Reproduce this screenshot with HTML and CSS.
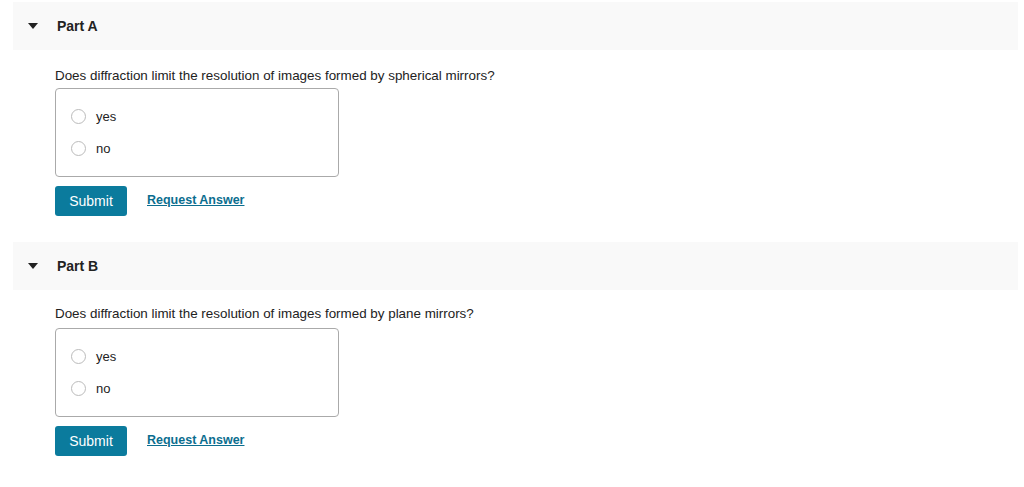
FILE: index.html
```html
<html>
	<head>
		<meta charset="utf-8">
		<title>Parts</title>
		<link rel="stylesheet" href="styles.css">
	</head>
	<body>
		<div class="part">
			<div class="part-header"><span class="arrow"></span><span class="part-title">Part A</span></div>
			<div class="part-body">
				<p class="question">Does diffraction limit the resolution of images formed by spherical mirrors?</p>
				<div class="choices">
					<label class="choice"><input type="radio" name="a"><span>yes</span></label>
					<label class="choice"><input type="radio" name="a"><span>no</span></label>
				</div>
				<div class="actions">
					<button type="button" class="submit">Submit</button>
					<a href="#" class="request">Request Answer</a>
				</div>
			</div>
		</div>
		<div class="part">
			<div class="part-header"><span class="arrow"></span><span class="part-title">Part B</span></div>
			<div class="part-body">
				<p class="question">Does diffraction limit the resolution of images formed by plane mirrors?</p>
				<div class="choices">
					<label class="choice"><input type="radio" name="b"><span>yes</span></label>
					<label class="choice"><input type="radio" name="b"><span>no</span></label>
				</div>
				<div class="actions">
					<button type="button" class="submit">Submit</button>
					<a href="#" class="request">Request Answer</a>
				</div>
			</div>
		</div>
	</body>
</html>
```

FILE: styles.css
```css
body {
	margin: 0;
	padding: 2px 6px 0 13px;
	font-family: "Liberation Sans", Arial, sans-serif;
	color: #222;
	background: #fff;
}
.part {
	height: 240px;
}
.part-header {
	height: 48px;
	background: #f9f9f9;
	display: flex;
	align-items: center;
}
.arrow {
	width: 0;
	height: 0;
	margin-left: 15px;
	border-left: 5px solid transparent;
	border-right: 5px solid transparent;
	border-top: 6px solid #222;
}
.part-title {
	margin-left: 19px;
	font-size: 14px;
	font-weight: bold;
	color: #222;
}
.part-body {
	padding-left: 42px;
}
.question {
	margin: 18px 0 0 0;
	font-size: 13.4px;
	line-height: 15px;
	color: #222;
}
.part + .part .question {
	margin-top: 16px;
}
.choices {
	margin-top: 5px;
	width: 284px;
	height: 89px;
	border: 1px solid #aaa;
	border-radius: 4px;
	padding: 20px 0 0 15px;
	box-sizing: border-box;
}
.part + .part .choices {
	margin-top: 7px;
}
.choice {
	display: flex;
	align-items: center;
	height: 15px;
	margin-bottom: 17px;
	font-size: 13px;
	color: #222;
}
.choice input {
	-webkit-appearance: none;
	appearance: none;
	width: 15px;
	height: 15px;
	margin: 0 10px 0 0;
	border: 1px solid #bbb;
	border-radius: 50%;
	background: #fff;
}
.actions {
	margin-top: 9px;
	display: flex;
	align-items: center;
}
.submit {
	width: 72px;
	height: 30px;
	background: #0b7b9d;
	color: #fff;
	border: none;
	border-radius: 3px;
	font-family: "Liberation Sans", Arial, sans-serif;
	font-size: 14px;
	padding: 0;
}
.request {
	margin-left: 20px;
	margin-top: -2px;
	font-size: 12.5px;
	font-weight: bold;
	color: #0b6e8f;
	text-decoration: underline;
}
```
